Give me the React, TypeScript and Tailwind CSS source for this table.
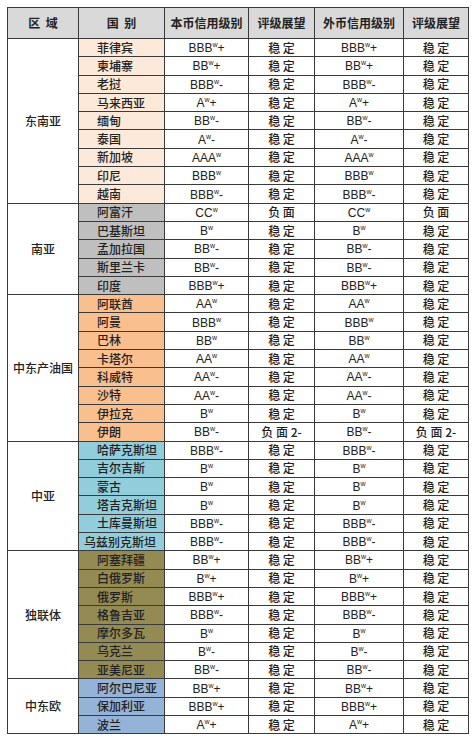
import React from 'react'

type Row = { name: string; local: [string, string]; lo: string; foreign: [string, string]; fo: string; pad?: string }
type Group = { region: string; bg: string; rows: Row[] }

const r = (name: string, base: string, suf: string, outlook = '稳 定', pad?: string): Row => ({
    name,
    local: [base, suf],
    lo: outlook,
    foreign: [base, suf],
    fo: outlook,
    pad,
})

const GROUPS: Group[] = [
    {
        region: '东南亚',
        bg: 'bg-[#fde9d9]',
        rows: [
            r('菲律宾', 'BBB', '+'),
            r('柬埔寨', 'BB', '+'),
            r('老挝', 'BBB', '-'),
            r('马来西亚', 'A', '+'),
            r('缅甸', 'BB', '-'),
            r('泰国', 'A', '-'),
            r('新加坡', 'AAA', ''),
            r('印尼', 'BBB', ''),
            r('越南', 'BBB', '-'),
        ],
    },
    {
        region: '南亚',
        bg: 'bg-[#bfbfbf]',
        rows: [
            r('阿富汗', 'CC', '', '负 面'),
            r('巴基斯坦', 'B', ''),
            r('孟加拉国', 'BB', '-'),
            r('斯里兰卡', 'BB', '-'),
            r('印度', 'BBB', '+'),
        ],
    },
    {
        region: '中东产油国',
        bg: 'bg-[#fabf8f]',
        rows: [
            r('阿联酋', 'AA', ''),
            r('阿曼', 'BBB', ''),
            r('巴林', 'BB', ''),
            r('卡塔尔', 'AA', ''),
            r('科威特', 'AA', '-'),
            r('沙特', 'AA', '-'),
            r('伊拉克', 'B', ''),
            r('伊朗', 'BB', '-', '负 面 2-'),
        ],
    },
    {
        region: '中亚',
        bg: 'bg-[#92cddc]',
        rows: [
            r('哈萨克斯坦', 'BBB', '-'),
            r('吉尔吉斯', 'B', ''),
            r('蒙古', 'B', ''),
            r('塔吉克斯坦', 'B', ''),
            r('土库曼斯坦', 'BBB', '-'),
            r('乌兹别克斯坦', 'BBB', '-', '稳 定', 'pl-[5px]'),
        ],
    },
    {
        region: '独联体',
        bg: 'bg-[#948a54]',
        rows: [
            r('阿塞拜疆', 'BB', '+'),
            r('白俄罗斯', 'B', '+'),
            r('俄罗斯', 'BBB', '+'),
            r('格鲁吉亚', 'BBB', '-'),
            r('摩尔多瓦', 'B', ''),
            r('乌克兰', 'B', '-'),
            r('亚美尼亚', 'BB', '-'),
        ],
    },
    {
        region: '中东欧',
        bg: 'bg-[#95b3d7]',
        rows: [
            r('阿尔巴尼亚', 'BB', '+'),
            r('保加利亚', 'BBB', '+'),
            r('波兰', 'A', '+'),
        ],
    },
]

const cjk = "font-['Noto_Sans_CJK_SC','Noto_Sans',sans-serif]"
const cell = 'border border-[#3a3a3a] p-0 h-[18.3px] leading-none'

function Rating({ v }: { v: [string, string] }) {
    return (
        <span className="font-['Liberation_Sans',Arial,sans-serif] text-[12px] text-[#222]">
            {v[0]}
            <sup className="text-[7px] relative -top-[5px] align-baseline">w</sup>
            {v[1]}
        </span>
    )
}

export default function App() {
    return (
        <div className="bg-white w-[474px] h-[738px] pt-[7px] pl-[7px]">
            <table className={`border-collapse table-fixed w-[461px] text-[12px] text-[#222] ${cjk}`}>
                <colgroup>
                    <col className="w-[71px]" />
                    <col className="w-[86px]" />
                    <col className="w-[84px]" />
                    <col className="w-[66px]" />
                    <col className="w-[89px]" />
                    <col className="w-[65px]" />
                </colgroup>
                <thead>
                    <tr className="bg-[#d9d9d9] font-bold">
                        <th className="border border-[#3a3a3a] h-[31px] p-0 whitespace-pre">区  域</th>
                        <th className="border border-[#3a3a3a] p-0 whitespace-pre">国  别</th>
                        <th className="border border-[#3a3a3a] p-0">本币信用级别</th>
                        <th className="border border-[#3a3a3a] p-0">评级展望</th>
                        <th className="border border-[#3a3a3a] p-0">外币信用级别</th>
                        <th className="border border-[#3a3a3a] p-0">评级展望</th>
                    </tr>
                </thead>
                <tbody>
                    {GROUPS.map(g =>
                        g.rows.map((row, i) => (
                            <tr key={row.name}>
                                {i === 0 && (
                                    <td rowSpan={g.rows.length} className="border border-[#3a3a3a] p-0 text-center font-medium">
                                        {g.region}
                                    </td>
                                )}
                                <td className={`${cell} ${g.bg} ${row.pad ?? 'pl-[18px]'} font-medium whitespace-nowrap`}>{row.name}</td>
                                <td className={`${cell} text-center`}><Rating v={row.local} /></td>
                                <td className={`${cell} text-center font-medium`}>{row.lo}</td>
                                <td className={`${cell} text-center`}><Rating v={row.foreign} /></td>
                                <td className={`${cell} text-center font-medium`}>{row.fo}</td>
                            </tr>
                        ))
                    )}
                </tbody>
            </table>
        </div>
    )
}
